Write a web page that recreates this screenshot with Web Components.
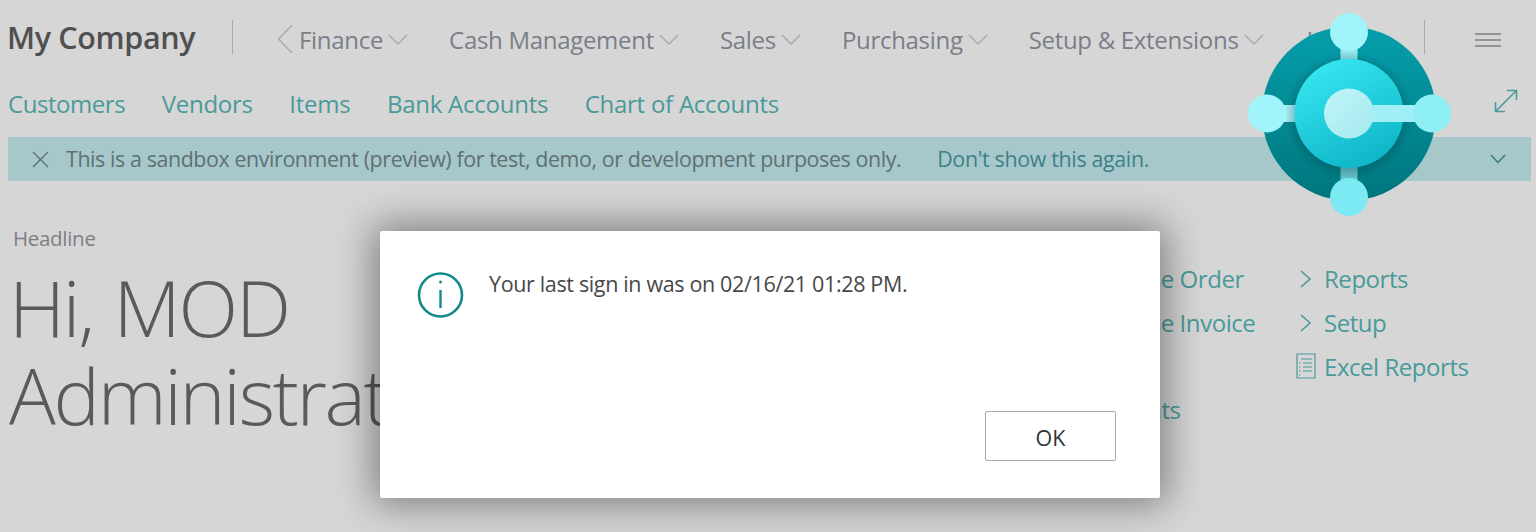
<!DOCTYPE html>
<html>
<head>
<meta charset="utf-8">
<title>My Company</title>
<style>
  html, body { margin: 0; height: 100%; }
  body { background: #d6d6d6; font-family: "Open Sans", "Noto Sans", sans-serif; overflow: hidden; }
</style>
</head>
<body>
<role-center>
  <top-nav slot="nav" company="My Company">
    <nav-item>Finance</nav-item>
    <nav-item>Cash Management</nav-item>
    <nav-item>Sales</nav-item>
    <nav-item>Purchasing</nav-item>
    <nav-item>Setup &amp; Extensions</nav-item>
    <nav-item plain>Help</nav-item>
  </top-nav>
  <link-bar slot="links">
    <a>Customers</a><a>Vendors</a><a>Items</a><a>Bank Accounts</a><a>Chart of Accounts</a>
  </link-bar>
  <notice-bar slot="notice" action="Don't show this again.">This is a sandbox environment (preview) for test, demo, or development purposes only.</notice-bar>
  <head-line slot="headline" label="Headline">Hi, MOD Administrator</head-line>
  <action-list slot="middle">
    <action-link>Purchase Order</action-link>
    <action-link>Purchase Invoice</action-link>
    <action-link></action-link>
    <action-link>Payments</action-link>
  </action-list>
  <action-list slot="right">
    <action-link icon="chevron">Reports</action-link>
    <action-link icon="chevron">Setup</action-link>
    <action-link icon="sheet">Excel Reports</action-link>
  </action-list>
</role-center>
<bc-logo></bc-logo>
<message-dialog button="OK">Your last sign in was on 02/16/21 01:28 PM.</message-dialog>

<script>
// small helper, every element is the same shape: template string -> open shadow root
function shadow(el, html) {
  el.attachShadow({ mode: 'open' });
  el.shadowRoot.innerHTML = html;
}

class RoleCenter extends HTMLElement {
  constructor() {
    super();
    shadow(this, `
      <style>
        :host { display: block; width: 1536px; height: 532px; overflow: hidden; }
        .content { display: flex; padding: 44px 0 0 9px; }
        .head { width: 1065px; flex: none; }
        .mid { width: 223px; flex: none; padding-top: 32px; }
        .right { padding-top: 32px; }
      </style>
      <slot name="nav"></slot>
      <slot name="links"></slot>
      <slot name="notice"></slot>
      <div class="content">
        <div class="head"><slot name="headline"></slot></div>
        <div class="mid"><slot name="middle"></slot></div>
        <div class="right"><slot name="right"></slot></div>
      </div>`);
  }
}

class TopNav extends HTMLElement {
  constructor() {
    super();
    shadow(this, `
      <style>
        :host { display: flex; align-items: center; height: 80px; padding: 0 35px 0 7px; box-sizing: border-box; }
        .company { font-size: 30.5px; font-weight: 600; color: #505050; letter-spacing: -.35px; width: 225px; flex: none; margin-top: -6px; white-space: nowrap; }
        .sep { width: 1px; height: 34px; background: #a9a9a9; flex: none; margin-top: -6px; }
        .back { margin: -2px 6px 0 44px; flex: none; display: flex; }
        .items { display: flex; gap: 41px; flex: none; margin-top: -2px; }
        .end { margin-left: auto; }
        .menu { margin: -1px 0 0 50px; display: flex; }
      </style>
      <div class="company">${this.getAttribute('company')}</div>
      <div class="sep"></div>
      <div class="back"><svg width="16" height="30" viewBox="0 0 16 30"><path d="M15 1 1.5 15 15 29" fill="none" stroke="#a9aab0" stroke-width="1.5"/></svg></div>
      <div class="items"><slot></slot></div>
      <div class="sep end"></div>
      <div class="menu"><svg width="26" height="14" viewBox="0 0 26 14"><path d="M0 1h26M0 7h26M0 13h26" stroke="#7c7e84" stroke-width="1.4"/></svg></div>`);
  }
}

class NavItem extends HTMLElement {
  constructor() {
    super();
    const chevron = this.hasAttribute('plain') ? '' :
      '<svg width="20" height="11" viewBox="0 0 20 11"><path d="M1 1 10 10 19 1" fill="none" stroke="#a5a7ad" stroke-width="1.3"/></svg>';
    shadow(this, `
      <style>
        :host { display: flex; align-items: center; gap: 5px; font-size: 24px; color: #7b7e88; letter-spacing: -.3px; white-space: nowrap; }
        :host([plain]) { margin-left: 2px; }
        svg { flex: none; }
      </style>
      <slot></slot>
      ${chevron}`);
  }
}

class LinkBar extends HTMLElement {
  constructor() {
    super();
    shadow(this, `
      <style>
        :host { display: flex; align-items: center; height: 48px; margin-bottom: 9px; padding: 0 18px 0 8px; box-sizing: border-box; }
        .links { display: flex; gap: 36.5px; font-size: 24px; color: #4a9a9a; letter-spacing: -.25px; white-space: nowrap; padding-bottom: 2px; }
        ::slotted(a:first-child) { letter-spacing: -.45px; }
        .expand { margin: 0 0 6px auto; display: flex; }
      </style>
      <div class="links"><slot></slot></div>
      <div class="expand"><svg width="24" height="24" viewBox="0 0 24 24" fill="none" stroke="#4a9a9a" stroke-width="1.6"><path d="M1.5 22.5 22.5 1.500M13 1.500h9.500V11M1.500 13v9.500H11"/></svg></div>`);
  }
}

class NoticeBar extends HTMLElement {
  constructor() {
    super();
    shadow(this, `
      <style>
        :host { display: flex; align-items: center; height: 44px; margin: 0 5px 0 8px; background: #a6c8cb; font-size: 21.4px; color: #5f7073; letter-spacing: -.33px; white-space: nowrap; }
        .x { display: flex; margin: 0 17px 0 24px; }
        .txt { letter-spacing: -.4px; padding-bottom: 2px; }
        .act { margin-left: 36px; color: #3f8086; padding-bottom: 2px; }
        .down { margin: 0 25px 0 auto; display: flex; }
      </style>
      <span class="x"><svg width="17" height="17" viewBox="0 0 17 17"><path d="M1 1 16 16M16 1 1 16" stroke="#5f7073" stroke-width="1.4"/></svg></span>
      <span class="txt"><slot></slot></span>
      <span class="act">${this.getAttribute('action')}</span>
      <span class="down"><svg width="16" height="10" viewBox="0 0 16 10"><path d="M1 1 8 8.500 15 1" fill="none" stroke="#3f7f85" stroke-width="1.700"/></svg></span>`);
  }
}

class HeadLine extends HTMLElement {
  constructor() {
    super();
    shadow(this, `
      <style>
        :host { display: block; }
        .label { font-size: 20.5px; color: #7d7f85; letter-spacing: -.3px; margin-left: 4px; line-height: 26px; }
        .big { font-size: 78px; font-weight: 300; color: #5a5a5a; line-height: 88px; letter-spacing: -2.3px; word-spacing: 3px; margin-top: 12px; width: 700px; }
      </style>
      <div class="label">${this.getAttribute('label')}</div>
      <div class="big"><slot></slot></div>`);
  }
}

class ActionList extends HTMLElement {
  constructor() {
    super();
    shadow(this, `
      <style>
        :host { display: flex; flex-direction: column; }
        ::slotted(action-link) { height: 43.700px; }
      </style>
      <slot></slot>`);
  }
}

class ActionLink extends HTMLElement {
  constructor() {
    super();
    const kind = this.getAttribute('icon');
    let icon = '';
    if (kind === 'chevron') {
      icon = '<svg width="11" height="18" viewBox="0 0 11 18"><path d="M1 1 10 9 1 17" fill="none" stroke="#4a9a9a" stroke-width="1.6"/></svg>';
    } else if (kind === 'sheet') {
      icon = '<svg width="20" height="26" viewBox="0 0 20 26" fill="none" stroke="#4a9a9a" stroke-width="1.2"><path d="M1 1h18v24H1zM5 6h11M3 10h1.500M7 10h9M3 14h1.500M7 14h9M3 18h1.500M7 18h9M3 22h1.500"/></svg>';
    }
    shadow(this, `
      <style>
        :host { display: flex; align-items: center; gap: 10px; font-size: 24px; color: #4a9a9a; letter-spacing: -.45px; white-space: nowrap; }
        .ic { width: 17px; display: flex; justify-content: center; }
        svg { flex: none; }
      </style>
      ${icon ? `<span class="ic">${icon}</span>` : ''}
      <slot></slot>`);
  }
}

class BcLogo extends HTMLElement {
  constructor() {
    super();
    shadow(this, `
      <style>
        :host { position: absolute; left: 1245px; top: 10px; width: 208px; height: 208px; display: block; }
        svg { display: block; }
      </style>
      <svg width="208" height="208" viewBox="0 0 208 208">
        <defs>
          <linearGradient id="outer" x1="0" y1="0" x2="0" y2="1"><stop offset="0" stop-color="#059fab"/><stop offset="1" stop-color="#00757d"/></linearGradient>
          <linearGradient id="inner" x1=".2" y1="0" x2=".7" y2="1"><stop offset="0" stop-color="#38e8f2"/><stop offset="1" stop-color="#0db4c6"/></linearGradient>
          <linearGradient id="core" x1="0" y1="0" x2="1" y2="1"><stop offset="0" stop-color="#c0f5f8"/><stop offset="1" stop-color="#a4e9f0"/></linearGradient>
          <radialGradient id="drop" cx=".5" cy=".5" r=".5"><stop offset=".78" stop-color="#003c44" stop-opacity=".35"/><stop offset="1" stop-color="#003c44" stop-opacity="0"/></radialGradient>
        </defs>
        <circle cx="104" cy="103.500" r="87" fill="url(#outer)"/>
        <rect x="95.500" y="22" width="17" height="60" fill="#90e6ec"/>
        <rect x="95.500" y="130" width="17" height="56" fill="#6cc6ce"/>
        <rect x="22" y="95" width="60" height="17" fill="#a8eef4"/>
        <circle cx="104" cy="106" r="64" fill="url(#drop)"/>
        <circle cx="104" cy="103.500" r="54.500" fill="url(#inner)"/>
        <rect x="104" y="95" width="82" height="17" fill="#a0eff5"/>
        <circle cx="104" cy="103.500" r="25" fill="url(#core)"/>
        <circle cx="104" cy="22" r="19" fill="#a0f4fa"/>
        <circle cx="104" cy="187" r="19" fill="#7ceaf2"/>
        <circle cx="22" cy="103.500" r="19" fill="#a0f4fa"/>
        <circle cx="187" cy="103.500" r="19" fill="#8eeff5"/>
      </svg>`);
  }
}

class MessageDialog extends HTMLElement {
  constructor() {
    super();
    shadow(this, `
      <style>
        :host { position: absolute; left: 380px; top: 231px; width: 780px; height: 267px; display: flex; flex-direction: column; background: #fff; border-radius: 2px; box-shadow: 0 0 38px 6px rgba(0,0,0,.42); box-sizing: border-box; padding: 38px 44px 37px 37px; }
        .msg { display: flex; gap: 25px; flex: 1; font-size: 21.5px; color: #484848; letter-spacing: -.35px; white-space: nowrap; }
        .msg span { line-height: 29px; }
        svg { flex: none; }
        .foot { display: flex; justify-content: flex-end; }
        button { width: 131px; height: 50px; background: #fff; border: 1px solid #a8a8a8; border-radius: 2px; font: 21.5px "Open Sans", "Noto Sans", sans-serif; color: #333; padding: 2px 0 0 0; }
      </style>
      <div class="msg">
        <svg width="47" height="50" viewBox="0 0 47 50" fill="none" stroke="#14898c" stroke-width="2.600"><circle cx="23.500" cy="26" r="21.500"/><path d="M23.500 21v18" stroke-width="2.400"/><circle cx="23.500" cy="13" r="1.500" fill="#14898c" stroke="none"/></svg>
        <span><slot></slot></span>
      </div>
      <div class="foot"><button>${this.getAttribute('button')}</button></div>`);
  }
}

customElements.define('role-center', RoleCenter);
customElements.define('top-nav', TopNav);
customElements.define('nav-item', NavItem);
customElements.define('link-bar', LinkBar);
customElements.define('notice-bar', NoticeBar);
customElements.define('head-line', HeadLine);
customElements.define('action-list', ActionList);
customElements.define('action-link', ActionLink);
customElements.define('bc-logo', BcLogo);
customElements.define('message-dialog', MessageDialog);
</script>
</body>
</html>
